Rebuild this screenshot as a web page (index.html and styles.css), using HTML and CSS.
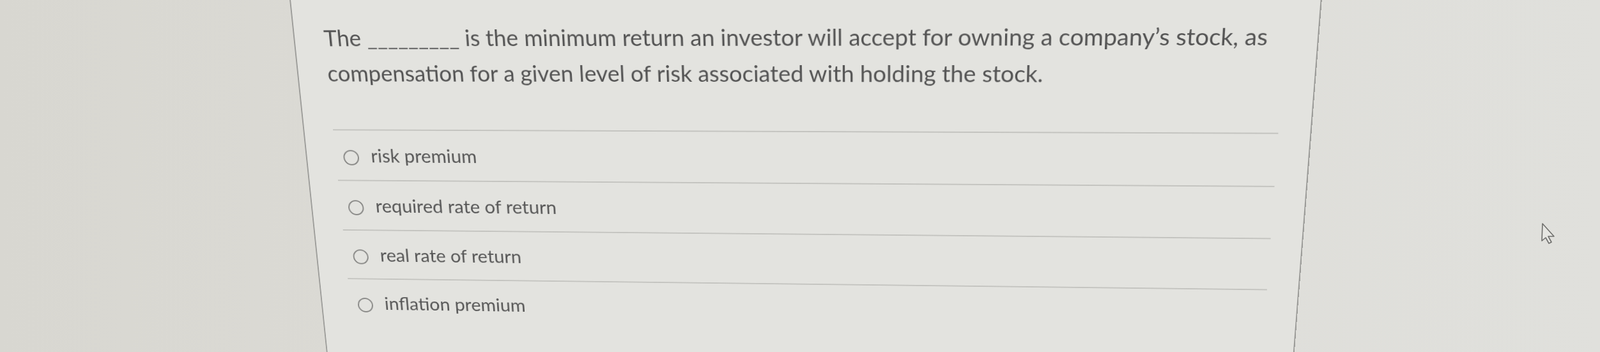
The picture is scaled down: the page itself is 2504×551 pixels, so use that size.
FILE: index.html
```html
<!DOCTYPE html>
<html lang="en">
<head>
<meta charset="utf-8">
<title>Question</title>
<link rel="stylesheet" href="styles.css">
</head>
<body>
<div class="screen">
  <div class="card">
    <p class="question">The <span class="blank">_________</span> is the minimum return an investor will accept for owning a company’s stock, as compensation for a given level of risk associated with holding the stock.</p>
    <ul class="options">
      <li class="option"><span class="radio"></span><span class="label">risk premium</span></li>
      <li class="option"><span class="radio"></span><span class="label">required rate of return</span></li>
      <li class="option"><span class="radio"></span><span class="label">real rate of return</span></li>
      <li class="option"><span class="radio"></span><span class="label">inflation premium</span></li>
    </ul>
  </div>
</div>
<svg class="cursor" width="30" height="40" viewBox="0 0 30 40" aria-hidden="true">
  <path d="M5 4 L4 31 L10 26 L15 35 L19 33 L14 24 L23 24 Z" fill="#e6e6e2" stroke="#6f6f6d" stroke-width="1.6" stroke-linejoin="round"/>
</svg>
</body>
</html>
```

FILE: styles.css
```css
html, body {
  margin: 0;
  padding: 0;
}

body {
  width: 2504px;
  height: 551px;
  overflow: hidden;
  background: linear-gradient(to right, #d8d7d1 0%, #dddcd7 40%, #e0e0dc 100%);
  font-family: Lato, "Open Sans", "Liberation Sans", sans-serif;
  position: relative;
}

.screen {
  display: flex;
  margin-top: -20px;
  padding-left: 440px;
  transform-origin: 1240px 120px;
  transform: perspective(2000px) rotateY(-4deg) rotateX(-12.9deg);
}

.card {
  width: 1600px;
  height: 720px;
  box-sizing: border-box;
  background: #e3e3df;
  border-left: 2px solid #9c9c99;
  border-right: 2px solid #9c9c99;
  padding: 48px 48px 0 48px;
  color: #565656;
}

.question {
  margin: 0 0 65px 0;
  font-size: 36.4px;
  line-height: 58px;
  color: #545454;
}

.blank {
  color: #6a6a6a;
}

.options {
  list-style: none;
  margin: 0;
  padding: 0;
}

.option {
  display: flex;
  align-items: flex-start;
  gap: 20px;
  border-top: 2px solid #c3c3bf;
  padding: 21px 0 21px 13px;
  font-size: 31px;
  line-height: 42px;
  color: #575757;
}

.radio {
  flex: none;
  width: 26px;
  height: 26px;
  margin-top: 12px;
  box-sizing: border-box;
  border: 2.5px solid #858583;
  border-radius: 50%;
}

.cursor {
  position: absolute;
  left: 2409px;
  top: 346px;
}
```
